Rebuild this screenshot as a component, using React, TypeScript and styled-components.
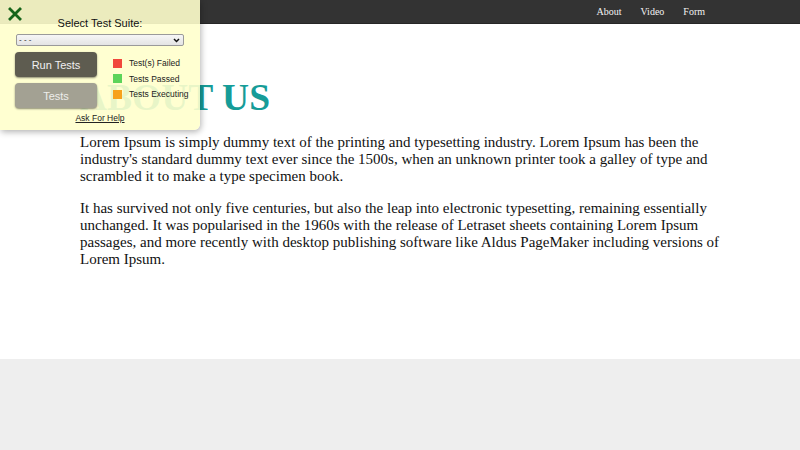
import styled, { createGlobalStyle } from 'styled-components'

const GlobalStyle = createGlobalStyle`
  html, body {
    margin: 0;
    padding: 0;
    background: #eeeeee;
  }
  body {
    font-family: "Liberation Serif", "Times New Roman", serif;
  }
`

const Page = styled.div`
  position: relative;
  width: 100%;
`

const Header = styled.header`
  height: 23px;
  background: #333333;
  border-bottom: 1px solid #262626;
  display: flex;
  justify-content: flex-end;
  align-items: center;
  padding-right: 95px;
`

const NavLink = styled.a`
  color: #f2f2f2;
  font-family: "Liberation Serif", serif;
  font-size: 10px;
  text-decoration: none;
  margin-left: 19px;
  cursor: pointer;
`

const Main = styled.main`
  background: #ffffff;
  height: 282px;
  padding: 53px 80px 0;
`

const Heading = styled.h1`
  margin: 0 0 16px;
  font-family: "Liberation Serif", serif;
  font-size: 37.5px;
  font-weight: 700;
  color: #169c98;
  line-height: 41px;
`

const Text = styled.p`
  margin: 0 0 15px;
  font-size: 15px;
  line-height: 17px;
  color: #111111;
  max-width: 650px;
`

const Panel = styled.div`
  position: absolute;
  top: 0;
  left: 0;
  width: 200px;
  height: 130px;
  box-sizing: border-box;
  background: rgba(255, 255, 204, 0.9);
  border-radius: 0 0 6px 0;
  box-shadow: 1px 2px 6px rgba(0, 0, 0, 0.3);
  font-family: "Liberation Sans", Arial, sans-serif;
  padding: 17px 15px 0 15px;
`

const Close = styled.button`
  position: absolute;
  top: 6px;
  left: 7px;
  width: 16px;
  height: 16px;
  padding: 0;
  border: none;
  background: none;
  cursor: pointer;
  display: flex;
`

const Title = styled.div`
  text-align: center;
  font-size: 11px;
  line-height: 13px;
  color: #111;
  margin-bottom: 4px;
`

const SelectWrap = styled.div`
  position: relative;
  margin: 0 1px 6px 1px;
  height: 12px;
`

const Select = styled.select`
  appearance: none;
  display: block;
  width: 100%;
  height: 12px;
  box-sizing: border-box;
  border: 1px solid #9a9a9a;
  border-radius: 2px;
  background: linear-gradient(#f6f6f6, #e4e4e4);
  font-family: "Liberation Sans", Arial, sans-serif;
  font-size: 8px;
  line-height: 10px;
  padding: 0 0 0 2px;
  margin: 0;
  color: #222;
  outline: none;
`

const Chevron = styled.svg`
  position: absolute;
  right: 4px;
  top: 4px;
  pointer-events: none;
`

const Controls = styled.div`
  display: flex;
  gap: 16px;
`

const Buttons = styled.div`
  display: flex;
  flex-direction: column;
  gap: 6px;
`

const Button = styled.button<{ $muted?: boolean }>`
  width: 82px;
  height: 25px;
  border: none;
  border-radius: 4px;
  background: ${p => (p.$muted ? '#a3a193' : '#5e5c50')};
  color: ${p => (p.$muted ? '#ededea' : '#f0f0f0')};
  font-family: "Liberation Sans", Arial, sans-serif;
  font-size: 11px;
  box-shadow: 0 1px 2px rgba(0, 0, 0, 0.45);
  cursor: pointer;
`

const Legend = styled.ul`
  list-style: none;
  margin: 6px 0 0;
  padding: 0;
  display: flex;
  flex-direction: column;
  gap: 5.5px;
`

const LegendItem = styled.li`
  display: flex;
  align-items: center;
  gap: 7px;
  font-size: 8.5px;
  line-height: 10px;
  color: #222;
  white-space: nowrap;
`

const Swatch = styled.span<{ $color: string }>`
  width: 9px;
  height: 9px;
  background: ${p => p.$color};
  flex: none;
`

const Help = styled.a`
  display: block;
  text-align: center;
  margin-top: 5px;
  font-size: 8.5px;
  line-height: 10px;
  color: #222;
  text-decoration: underline;
  cursor: pointer;
`

const legend = [
  { label: 'Test(s) Failed', color: '#f1483c' },
  { label: 'Tests Passed', color: '#5dd45a' },
  { label: 'Tests Executing', color: '#f7a21c' },
]

export default function App () {
  return (
    <Page>
      <GlobalStyle />
      <Header>
        <NavLink>About</NavLink>
        <NavLink>Video</NavLink>
        <NavLink>Form</NavLink>
      </Header>
      <Main>
        <Heading>ABOUT US</Heading>
        <Text>
          Lorem Ipsum is simply dummy text of the printing and typesetting industry. Lorem Ipsum has been the
          industry's standard dummy text ever since the 1500s, when an unknown printer took a galley of type and
          scrambled it to make a type specimen book.
        </Text>
        <Text>
          It has survived not only five centuries, but also the leap into electronic typesetting, remaining essentially
          unchanged. It was popularised in the 1960s with the release of Letraset sheets containing Lorem Ipsum
          passages, and more recently with desktop publishing software like Aldus PageMaker including versions of
          Lorem Ipsum.
        </Text>
      </Main>

      <Panel>
        <Close aria-label="close">
          <svg width="16" height="16" viewBox="0 0 16 16">
            <path d="M3 3 L13 13 M13 3 L3 13" stroke="#16651a" strokeWidth="2.8" strokeLinecap="square" />
          </svg>
        </Close>
        <Title>Select Test Suite:</Title>
        <SelectWrap>
          <Select defaultValue="">
            <option value="">- - -</option>
          </Select>
          <Chevron width="7" height="5" viewBox="0 0 7 5">
            <path d="M1 1 L3.5 3.5 L6 1" stroke="#111" strokeWidth="1.5" fill="none" />
          </Chevron>
        </SelectWrap>
        <Controls>
          <Buttons>
            <Button>Run Tests</Button>
            <Button $muted>Tests</Button>
          </Buttons>
          <Legend>
            {legend.map(item => (
              <LegendItem key={item.label}>
                <Swatch $color={item.color} />
                {item.label}
              </LegendItem>
            ))}
          </Legend>
        </Controls>
        <Help>Ask For Help</Help>
      </Panel>
    </Page>
  )
}
